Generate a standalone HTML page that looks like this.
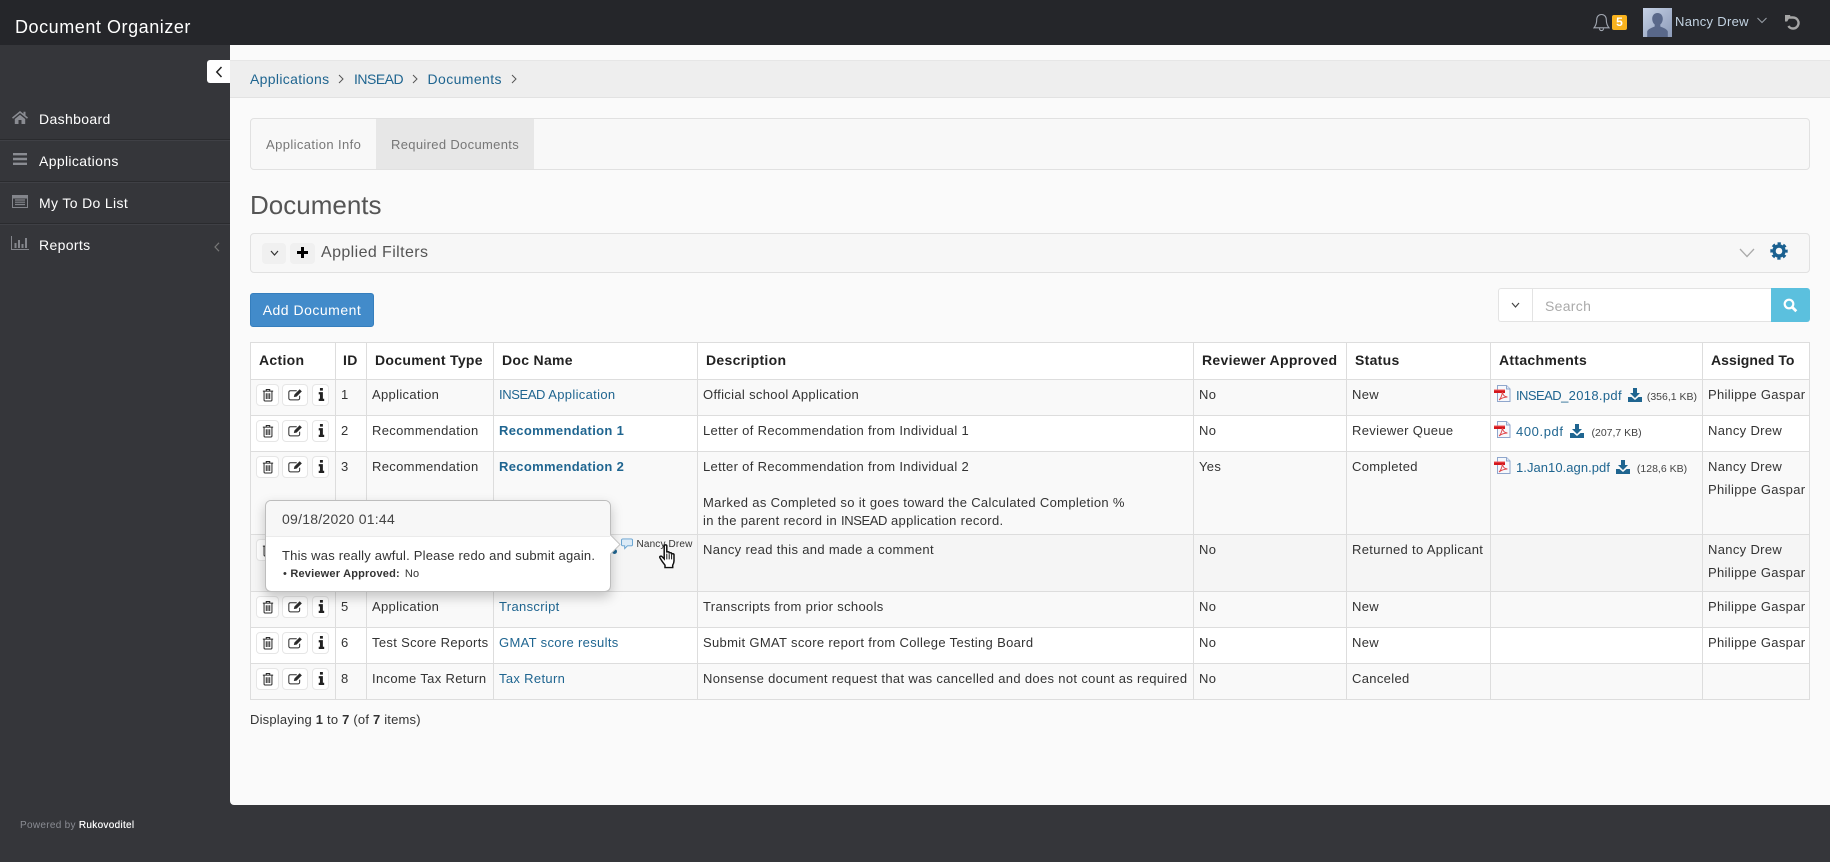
<!DOCTYPE html>
<html><head><meta charset="utf-8"><title>Documents</title>
<style>
*{box-sizing:border-box}
html,body{margin:0;padding:0;width:1830px;height:862px;overflow:hidden;background:#35363a;font-family:"Liberation Sans",sans-serif;font-size:13px;color:#333}
a{color:#1f6590;text-decoration:none}
.t{position:absolute;white-space:nowrap}
#top{position:absolute;left:0;top:0;width:1830px;height:45px;background:#25262a}
#main{position:absolute;left:230px;top:45px;width:1600px;height:760px;background:#fafafa;border-bottom-left-radius:4px}
.mi{position:absolute;left:0;width:230px;height:42px;border-bottom:1px solid #2a2b2e;box-shadow:0 1px 0 #3f4045}
.mi span{position:absolute;left:39px;top:12px;color:#fff;font-size:14px;letter-spacing:.35px;line-height:18px}
.mi svg{position:absolute}
table{position:absolute;left:250px;top:342px;width:1559px;border-collapse:collapse;table-layout:fixed;letter-spacing:.33px}
td,th{border:1px solid #ddd;vertical-align:top;line-height:18px;overflow:visible;white-space:nowrap;padding:6px 5px 0 5px;text-align:left;font-weight:normal}
th{background:#fff;font-weight:bold;font-size:14px;height:37px;padding:8px 8px 0;letter-spacing:.3px;color:#222}
tr.o td{background:#f9f9f9}
tr.e td{background:#fff}
tr.h td{background:#f5f5f5}
tr.r td{height:36px}
.cap{letter-spacing:-.4px}
.b{display:inline-block;position:relative;height:22px;background:#fff;border:1px solid #e6e6e6;border-radius:4px;vertical-align:top;margin-right:3px;margin-top:-2px}
.b.w{margin-right:4px}
.b svg{position:absolute}
td.act{padding:6px 0 0 5px}
.sz{font-size:10.500px;letter-spacing:0;color:#444;margin-left:2px}
td.att{position:relative;padding-left:25px;padding-top:7px}
.att .pdf{position:absolute;left:3px;top:5px}
.dl{display:inline-block;vertical-align:-2px;margin:0 1px 0 2px}
td.as{line-height:23px;padding-top:2.500px}
</style></head><body>
<svg width="0" height="0" style="position:absolute">
<defs>
<symbol id="trash" viewBox="0 0 14 16"><path d="M1 3.500h12M5 3.500V1.600h4v1.900M2.400 3.500v10.200c0 .9.5 1.300 1.200 1.300h6.800c.7 0 1.200-.4 1.200-1.300V3.500M5 6v6.600M7 6v6.600M9 6v6.600" fill="none" stroke="#2b2b2b" stroke-width="1.200"/></symbol>
<symbol id="edit" viewBox="0 0 18 15"><path d="M10.500 3H3c-1.100 0-2 .8-2 2v7c0 1.100.9 2 2 2h9c1.100 0 2-.9 2-2V9" fill="none" stroke="#2b2b2b" stroke-width="1.200"/><path d="M7 10.500l.7-3L14 1.200l2.600 2.600-6.300 6.200z" fill="#2b2b2b"/></symbol>
<symbol id="info" viewBox="0 0 8 15"><path d="M2.200 0h3.400v3H2.200zM.8 4.800h4.800v7.600h1.500V15H.8v-2.600h1.400v-5H.8z" fill="#222"/></symbol>
<symbol id="dl" viewBox="0 0 14 14"><path d="M5 0h4v5h3L7 10 2 5h3zM0 9h3.500L7 12l3.500-3H14v5H0z" fill="#1f6590"/></symbol>
<symbol id="pdf" viewBox="0 0 17 17"><path d="M3.500.5h9l3.500 3.500v12.500H3.500z" fill="#f6f8fc" stroke="#8fa6cc"/><path d="M12.500.5V4H16" fill="#dfe7f5" stroke="#8fa6cc"/><path d="M0 4.500h11v3.500H0z" fill="#d3171c"/><path d="M0 4.500h11v1H0z" fill="#f05a5a"/><path d="M5 15c1.500-1 3-4.500 3.400-8 .4 3 1.600 4.500 5 5-3 .1-5.500.8-8.400 3z" fill="none" stroke="#e0484c" stroke-width="1"/></symbol>
</defs></svg>

<div id="top"></div>
<div class="t" style="left:15px;top:15px;color:#fff;font-size:18px;letter-spacing:.55px;line-height:24px">Document Organizer</div>

<!-- top right -->
<svg class="t" style="left:1593px;top:13px" width="17" height="20" viewBox="0 0 17 20"><path d="M8.500 1.500c-3 0-4.800 2.200-4.800 5.300 0 4-1 6-2.700 8h15c-1.700-2-2.700-4-2.700-8 0-3.100-1.800-5.300-4.800-5.300zM6.500 15.500c0 2.800 4 2.800 4 0" fill="none" stroke="#a3a8b2" stroke-width="1.100"/></svg>
<div class="t" style="left:1612px;top:15px;width:15px;height:15px;background:#f9b21d;border-radius:2px;color:#fff;font-size:12px;font-weight:bold;text-align:center;line-height:15px">5</div>
<svg class="t" style="left:1643px;top:8px" width="29" height="29" viewBox="0 0 29 29"><defs><linearGradient id="av" x1="0" y1="0" x2="1" y2="1"><stop offset="0" stop-color="#c6d2e6"/><stop offset="1" stop-color="#8c9ab8"/></linearGradient></defs><rect width="29" height="29" fill="url(#av)"/><path d="M14.500 5c-3.500 0-5.300 2.700-5.300 5.800 0 2.500 1.100 4.700 2.500 5.700v2c-2.500 1.200-6.500 2.200-7.500 5V29h20.600v-5.500c-1-2.800-5-3.800-7.500-5v-2c1.400-1 2.500-3.200 2.500-5.700C19.800 7.700 18 5 14.500 5z" fill="#59688a"/></svg>
<div class="t" style="left:1675px;top:13px;color:#c3d3e2;font-size:13px;letter-spacing:.3px;line-height:18px">Nancy Drew</div>
<svg class="t" style="left:1757px;top:17px" width="10" height="7" viewBox="0 0 10 7"><path d="M.5 1l4.500 4.500L9.500 1" fill="none" stroke="#9aa0a8" stroke-width="1"/></svg>
<svg class="t" style="left:1784px;top:14px" width="17" height="17" viewBox="0 0 17 17"><path d="M3.500 3.500h5.500a5.500 5.500 0 1 1-4.600 8.500" fill="none" stroke="#a5a5a5" stroke-width="2.400"/><path d="M1 1v6.500h2.200l3-5V1z" fill="#a5a5a5"/></svg>

<!-- sidebar -->
<div class="mi" style="top:98px"><svg style="left:12px;top:13px" width="16" height="13" viewBox="0 0 16 13"><path d="M8 0L0 6.500l1 1.200L8 2l7 5.700 1-1.200-2.500-2V.7h-2v2.200zM2.800 8L8 3.700 13.200 8v5H9.500V9h-3v4H2.800z" fill="#8a8c92"/></svg><span>Dashboard</span></div>
<div class="mi" style="top:140px"><svg style="left:13px;top:13px" width="14" height="12" viewBox="0 0 14 12"><path d="M0 0h14v2.400H0zM0 4.800h14v2.400H0zM0 9.600h14V12H0z" fill="#8a8c92"/></svg><span>Applications</span></div>
<div class="mi" style="top:182px"><svg style="left:12px;top:13px" width="16" height="13" viewBox="0 0 16 13"><path d="M.5.500h15v12H.5z" fill="none" stroke="#83858b"/><path d="M1 1h14v2.500H1z" fill="#83858b"/><path d="M3 5h10M3 7.200h10M3 9.500h10" stroke="#83858b" stroke-width="1.200"/></svg><span>My To Do List</span></div>
<div class="mi" style="top:224px;border:0;box-shadow:none"><svg style="left:11px;top:12px" width="18" height="14" viewBox="0 0 18 14"><path d="M.5 0v13.500H18" fill="none" stroke="#83858b"/><path d="M3.500 7h2v5h-2zM7 4h2v8H7zM10.500 8h2v4h-2zM14 2h2v10h-2z" fill="#83858b"/></svg><span>Reports</span><svg style="left:214px;top:18px" width="6" height="10" viewBox="0 0 6 10"><path d="M5 .8L1 5l4 4.200" fill="none" stroke="#777" stroke-width="1.200"/></svg></div>

<div id="main"></div>
<div class="t" style="left:207px;top:60px;width:24px;height:23px;background:#fff;border-radius:3px 0 0 3px"></div>
<svg class="t" style="left:215px;top:66px" width="8" height="12" viewBox="0 0 8 12"><path d="M6.500 1L1.800 6l4.700 5" fill="none" stroke="#222" stroke-width="1.500"/></svg>

<!-- breadcrumb -->
<div class="t" style="left:230px;top:60px;width:1600px;height:38px;background:#eee;border-top:1px solid #e6e6e6;border-bottom:1px solid #e2e2e2"></div>
<a class="t" style="left:250px;top:70px;font-size:14px;line-height:18px;letter-spacing:.33px">Applications</a>
<a class="t" style="left:354px;top:70px;font-size:14px;line-height:18px;letter-spacing:-.5px">INSEAD</a>
<a class="t" style="left:427.500px;top:70px;font-size:14px;line-height:18px;letter-spacing:.4px">Documents</a>
<svg class="t" style="left:338px;top:74px" width="6" height="10" viewBox="0 0 6 10"><path d="M1 1l4 4-4 4" fill="none" stroke="#555"/></svg>
<svg class="t" style="left:412px;top:74px" width="6" height="10" viewBox="0 0 6 10"><path d="M1 1l4 4-4 4" fill="none" stroke="#555"/></svg>
<svg class="t" style="left:511px;top:74px" width="6" height="10" viewBox="0 0 6 10"><path d="M1 1l4 4-4 4" fill="none" stroke="#555"/></svg>

<!-- tabs -->
<div class="t" style="left:250px;top:118px;width:1560px;height:52px;background:#f8f8f8;border:1px solid #e1e1e1;border-radius:4px"></div>
<div class="t" style="left:376px;top:119px;width:158px;height:50px;background:#e7e7e7"></div>
<div class="t" style="left:266px;top:136px;font-size:13px;letter-spacing:.4px;color:#777;line-height:18px">Application Info</div>
<div class="t" style="left:391px;top:136px;font-size:13px;letter-spacing:.33px;color:#777;line-height:18px">Required Documents</div>

<div class="t" style="left:250px;top:187.500px;font-size:26px;color:#555;line-height:34px">Documents</div>

<!-- filters -->
<div class="t" style="left:250px;top:233px;width:1560px;height:40px;background:#f7f7f7;border:1px solid #e1e1e1;border-radius:4px"></div>
<div class="t" style="left:262px;top:243px;width:24px;height:21px;background:#f0f0f0;border-radius:4px"></div>
<svg class="t" style="left:270px;top:250px" width="9" height="7" viewBox="0 0 9 7"><path d="M1 1l3.500 4L8 1" fill="none" stroke="#333" stroke-width="1.200"/></svg>
<div class="t" style="left:290px;top:243px;width:25px;height:21px;background:#f0f0f0;border-radius:4px"></div>
<svg class="t" style="left:297px;top:246px" width="11" height="13" viewBox="0 0 11 13"><path d="M4 1h3v4h4v3H7v4H4V8H0V5h4z" fill="#000"/></svg>
<div class="t" style="left:321px;top:242px;font-size:16px;letter-spacing:.4px;color:#555;line-height:21px">Applied Filters</div>
<svg class="t" style="left:1739px;top:248px" width="16" height="10" viewBox="0 0 16 10"><path d="M1 1l7 7.500L15 1" fill="none" stroke="#aaa" stroke-width="1.300"/></svg>
<svg class="t" style="left:1770px;top:242px" width="18" height="18" viewBox="0 0 18 18"><circle cx="9" cy="9" r="5" fill="none" stroke="#1a6090" stroke-width="3.400"/><circle cx="9" cy="9" r="7.300" fill="none" stroke="#1a6090" stroke-width="2.800" stroke-dasharray="3.200 2.530" stroke-dashoffset="1.600"/></svg>

<!-- add button -->
<div class="t" style="left:250px;top:293px;width:124px;height:34px;background:#428bca;border:1px solid #357ebd;border-radius:3px;color:#fff;font-size:14px;letter-spacing:.5px;text-align:center;line-height:32px">Add Document</div>

<!-- search -->
<div class="t" style="left:1498px;top:288px;width:273px;height:34px;background:#fff;border:1px solid #e3e3e3;border-right:0;border-radius:3px 0 0 3px"></div>
<div class="t" style="left:1532px;top:289px;width:1px;height:32px;background:#e3e3e3"></div>
<svg class="t" style="left:1511px;top:302px" width="9" height="7" viewBox="0 0 9 7"><path d="M1 1l3.500 4L8 1" fill="none" stroke="#444" stroke-width="1.200"/></svg>
<div class="t" style="left:1545px;top:297px;font-size:14px;letter-spacing:.3px;color:#aaa;line-height:18px">Search</div>
<div class="t" style="left:1771px;top:288px;width:39px;height:34px;background:#5bc0de;border-radius:0 3px 3px 0"></div>
<svg class="t" style="left:1783px;top:298px" width="15" height="15" viewBox="0 0 15 15"><circle cx="6" cy="6" r="4.300" fill="none" stroke="#fff" stroke-width="2.200"/><path d="M9.300 9.300l4 4" stroke="#fff" stroke-width="2.800"/></svg>

<!-- table -->
<table>
<colgroup><col style="width:85px"><col style="width:31px"><col style="width:127px"><col style="width:204px"><col style="width:496px"><col style="width:153px"><col style="width:144px"><col style="width:212px"><col style="width:107px"></colgroup>
<tr><th>Action</th><th style="padding-left:7px">ID</th><th>Document Type</th><th>Doc Name</th><th>Description</th><th>Reviewer Approved</th><th>Status</th><th>Attachments</th><th style="letter-spacing:.05px">Assigned To</th></tr>

<tr class="o r"><td class="act"><span class="b" style="width:23px"><svg style="left:4.500px;top:2.500px" width="12" height="14"><use href="#trash"/></svg></span><span class="b w" style="width:26px"><svg style="left:5px;top:3px" width="15" height="13"><use href="#edit"/></svg></span><span class="b" style="width:17px"><svg style="left:4.500px;top:3px" width="7" height="13"><use href="#info"/></svg></span></td><td>1</td><td>Application</td><td><a><span class="cap">INSEAD</span> Application</a></td><td>Official school Application</td><td>No</td><td>New</td><td class="att"><svg class="pdf" width="17" height="17"><use href="#pdf"/></svg><a><span class="cap" style="letter-spacing:-.55px">INSEAD</span>_2018.pdf</a> <svg class="dl" width="14" height="14"><use href="#dl"/></svg> <span class="sz" style="margin-left:0">(356,1 KB)</span></td><td>Philippe Gaspar</td></tr>

<tr class="e r"><td class="act"><span class="b" style="width:23px"><svg style="left:4.500px;top:2.500px" width="12" height="14"><use href="#trash"/></svg></span><span class="b w" style="width:26px"><svg style="left:5px;top:3px" width="15" height="13"><use href="#edit"/></svg></span><span class="b" style="width:17px"><svg style="left:4.500px;top:3px" width="7" height="13"><use href="#info"/></svg></span></td><td>2</td><td>Recommendation</td><td><a><b>Recommendation 1</b></a></td><td>Letter of Recommendation from Individual 1</td><td>No</td><td>Reviewer Queue</td><td class="att"><svg class="pdf" width="17" height="17"><use href="#pdf"/></svg><a style="letter-spacing:.6px">400.pdf</a> <svg class="dl" width="14" height="14"><use href="#dl"/></svg> <span class="sz" style="margin-left:3px">(207,7 KB)</span></td><td>Nancy Drew</td></tr>

<tr class="o"><td class="act" style="height:83px"><span class="b" style="width:23px"><svg style="left:4.500px;top:2.500px" width="12" height="14"><use href="#trash"/></svg></span><span class="b w" style="width:26px"><svg style="left:5px;top:3px" width="15" height="13"><use href="#edit"/></svg></span><span class="b" style="width:17px"><svg style="left:4.500px;top:3px" width="7" height="13"><use href="#info"/></svg></span></td><td>3</td><td>Recommendation</td><td><a><b>Recommendation 2</b></a></td><td>Letter of Recommendation from Individual 2<br><br>Marked as Completed so it goes toward the Calculated Completion %<br>in the parent record in <span class="cap">INSEAD</span> application record.</td><td>Yes</td><td>Completed</td><td class="att"><svg class="pdf" width="17" height="17"><use href="#pdf"/></svg><a style="letter-spacing:.05px">1.Jan10.agn.pdf</a> <svg class="dl" width="14" height="14"><use href="#dl"/></svg> <span class="sz">(128,6 KB)</span></td><td class="as">Nancy Drew<br>Philippe Gaspar</td></tr>

<tr class="h"><td class="act" style="height:57px"><span class="b" style="width:23px"><svg style="left:4.500px;top:2.500px" width="12" height="14"><use href="#trash"/></svg></span></td><td></td><td></td><td></td><td>Nancy read this and made a comment</td><td>No</td><td>Returned to Applicant</td><td></td><td class="as">Nancy Drew<br>Philippe Gaspar</td></tr>

<tr class="o r"><td class="act"><span class="b" style="width:23px"><svg style="left:4.500px;top:2.500px" width="12" height="14"><use href="#trash"/></svg></span><span class="b w" style="width:26px"><svg style="left:5px;top:3px" width="15" height="13"><use href="#edit"/></svg></span><span class="b" style="width:17px"><svg style="left:4.500px;top:3px" width="7" height="13"><use href="#info"/></svg></span></td><td>5</td><td>Application</td><td><a>Transcript</a></td><td>Transcripts from prior schools</td><td>No</td><td>New</td><td></td><td>Philippe Gaspar</td></tr>

<tr class="e r"><td class="act"><span class="b" style="width:23px"><svg style="left:4.500px;top:2.500px" width="12" height="14"><use href="#trash"/></svg></span><span class="b w" style="width:26px"><svg style="left:5px;top:3px" width="15" height="13"><use href="#edit"/></svg></span><span class="b" style="width:17px"><svg style="left:4.500px;top:3px" width="7" height="13"><use href="#info"/></svg></span></td><td>6</td><td>Test Score Reports</td><td><a>GMAT score results</a></td><td>Submit GMAT score report from College Testing Board</td><td>No</td><td>New</td><td></td><td>Philippe Gaspar</td></tr>

<tr class="o r"><td class="act"><span class="b" style="width:23px"><svg style="left:4.500px;top:2.500px" width="12" height="14"><use href="#trash"/></svg></span><span class="b w" style="width:26px"><svg style="left:5px;top:3px" width="15" height="13"><use href="#edit"/></svg></span><span class="b" style="width:17px"><svg style="left:4.500px;top:3px" width="7" height="13"><use href="#info"/></svg></span></td><td>8</td><td>Income Tax Return</td><td><a>Tax Return</a></td><td>Nonsense document request that was cancelled and does not count as required</td><td>No</td><td>Canceled</td><td></td><td></td></tr>
</table>

<!-- comment + name -->
<svg class="t" style="left:621px;top:538px" width="12" height="12" viewBox="0 0 13 12"><path d="M2 .5h9c.9 0 1.500.6 1.500 1.500v4.500c0 .9-.6 1.500-1.500 1.500H7L4 11V8H2C1.100 8 .5 7.400.5 6.500V2C.5 1.100 1.100.5 2 .5z" fill="#dcebf7" stroke="#62a0cf"/></svg>
<div class="t" style="left:636.500px;top:538px;font-size:10px;letter-spacing:.15px;line-height:14px;color:#333">Nancy Drew</div>
<div class="t" style="left:612px;top:549px;width:5px;height:5px;background:#1f6590;border-radius:50%"></div>

<!-- popover -->
<div class="t" style="left:265px;top:500px;width:346px;height:92px;background:#fff;border:1px solid #bdbdbd;border-radius:6px;box-shadow:0 5px 12px rgba(0,0,0,.22)">
  <div style="height:36px;background:#f7f7f7;border-bottom:1px solid #ebebeb;border-radius:5px 5px 0 0;padding:8px 16px;font-size:14px;letter-spacing:.25px;line-height:20px;color:#444">09/18/2020 01:44</div>
  <div style="position:absolute;left:16px;top:46px;font-size:13px;letter-spacing:.2px;line-height:18px;color:#333">This was really awful. Please redo and submit again.</div>
  <div style="position:absolute;left:17px;top:66px;font-size:11px;letter-spacing:.2px;line-height:15px;color:#333">• <b>Reviewer Approved:</b><span style="margin-left:5px">No</span></div>
</div>
<svg class="t" style="left:610px;top:534px" width="11" height="21" viewBox="0 0 11 21"><path d="M0 .5L10 10.500 0 20.500z" fill="#fff"/><path d="M0 .5L10 10.500 0 20.500" fill="none" stroke="#c4c4c4"/></svg>

<!-- hand cursor -->
<svg class="t" style="left:658px;top:544px" width="20" height="25" viewBox="0 0 20 26" preserveAspectRatio="none"><path d="M6.200 2c0-1.500 2.600-1.500 2.600 0v7c0-1.300 2.400-1.300 2.400 0v1c0-1.300 2.400-1.300 2.400 0v1c0-1.200 2.400-1.200 2.400.2v6.300c0 1.800-.5 3-1.300 4.500v2.500H7v-2.500c-1.200-1.500-2.700-3.300-5-7.500-.9-1.600 1-2.600 2.100-1.300l2.100 2.300z" fill="#fff" stroke="#111" stroke-width="1.500"/><path d="M8.800 10v6M11.200 10.500v5.500M13.600 11v5" stroke="#111" stroke-width="1"/></svg>

<div class="t" style="left:250px;top:711px;font-size:13px;letter-spacing:.2px;line-height:18px">Displaying <b>1</b> to <b>7</b> (of <b>7</b> items)</div>
<div class="t" style="left:20px;top:819px;font-size:10px;letter-spacing:.3px;line-height:13px;color:#8a8c93">Powered by <span style="color:#fff;text-shadow:0 0 .4px #fff">Rukovoditel</span></div>
</body></html>
